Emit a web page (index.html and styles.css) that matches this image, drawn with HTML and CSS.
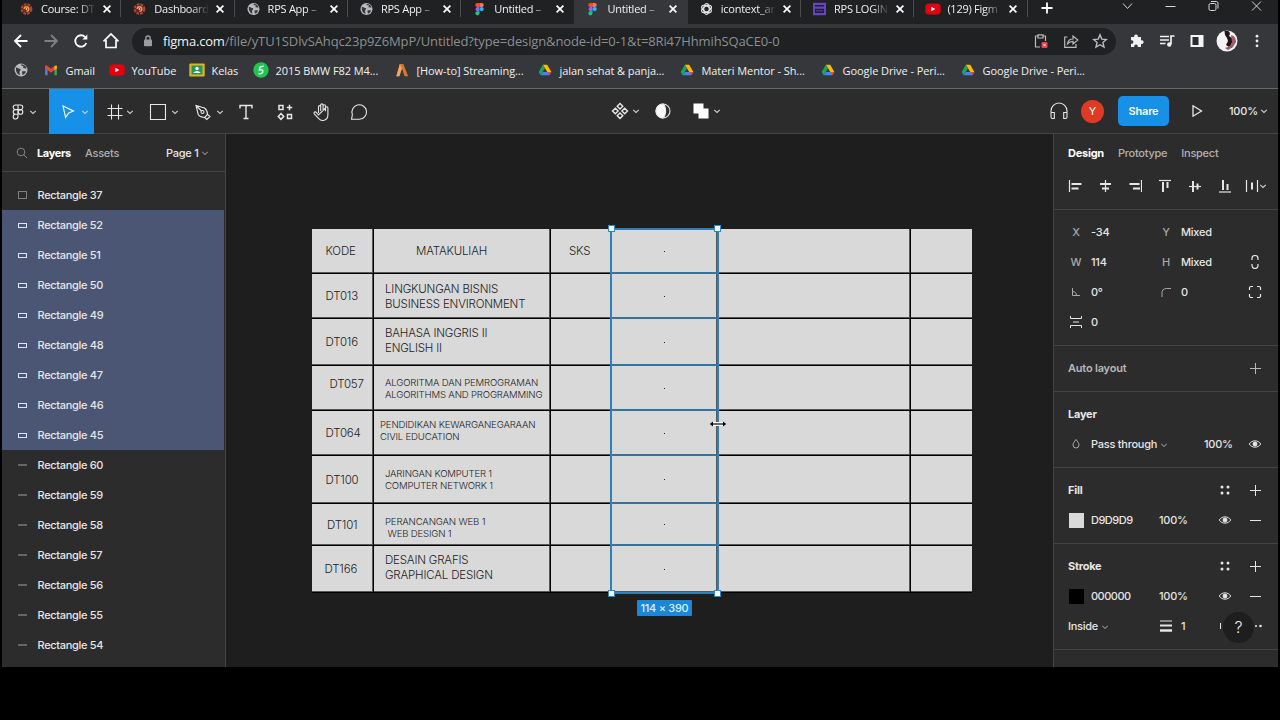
FILE: index.html
```html
<!DOCTYPE html>
<html lang="en">
<head>
<meta charset="utf-8">
<title>Untitled – Figma</title>
<link rel="stylesheet" href="styles.css">
</head>
<body>
<svg class="defs" aria-hidden="true">
  <symbol id="x" viewBox="0 0 10 10"><path d="M1.6 1.6l6.8 6.8M8.4 1.6L1.6 8.4" fill="none" stroke="currentColor" stroke-width="1.7"/></symbol>
  <symbol id="chev" viewBox="0 0 10 10"><path d="M2.2 3.8L5 6.4l2.800-2.600" fill="none" stroke="currentColor" stroke-width="1.1"/></symbol>
  <symbol id="globe" viewBox="0 0 14 14"><circle cx="7" cy="7" r="6.500" fill="#b9bcbf"/><path d="M2 4.500c2 0 2.500 1.500 4.500 1.500.5 2-1.500 2-1 3.500L6 12C3.500 11.500 1.500 9 2 4.500zM7 1.500c0 1.500 1 1.500 2.500 1.500L9 5c1.500 0 2 .5 3.500.5C12.500 3.500 10 1.300 7 1.500zM8 8.500c1.500-.5 2.500 0 4 0-.7 2-2 3-3.500 3.500z" fill="#37393c"/></symbol>
  <symbol id="course" viewBox="0 0 14 14"><circle cx="7" cy="7" r="5" fill="none" stroke="#b0472f" stroke-width="2.600" stroke-dasharray="3 1"/><circle cx="7" cy="7" r="4" fill="#6b2440"/><path d="M4.500 7a2.500 2.500 0 1 1 2.500 2.500" fill="none" stroke="#f0a13a" stroke-width="1.500"/><circle cx="7" cy="7" r="1" fill="#ffd35c"/></symbol>
  <symbol id="figma" viewBox="0 0 12 16"><path d="M6 1H3.500a2.400 2.400 0 0 0 0 4.800H6z" fill="#f24e1e"/><path d="M6 1h2.500a2.400 2.400 0 0 1 0 4.800H6z" fill="#ff7262"/><path d="M6 5.800H3.500a2.400 2.400 0 0 0 0 4.700H6z" fill="#a259ff"/><circle cx="8.500" cy="8.100" r="2.400" fill="#1abcfe"/><path d="M6 10.500H3.500A2.400 2.400 0 1 0 6 12.900z" fill="#0acf83"/></symbol>
  <symbol id="yt" viewBox="0 0 16 12"><rect x=".3" y=".5" width="15.400" height="11" rx="3.500" fill="#e3000f"/><path d="M6.300 3.700v4.600L10.300 6z" fill="#fff"/></symbol>
  <symbol id="drive" viewBox="0 0 16 14"><path d="M5.500 1h5l4.800 8.300h-4.700L8 4.900z" fill="#ffba00"/><path d="M5.500 1L8 4.900 5.600 9.100 2.800 13 .8 9.300z" fill="#1ea362"/><path d="M5.500 9.300h9.800L13 13H2.800z" fill="#4285f4"/><path d="M11 9.300h4.300L13 13z" fill="#ea4335"/></symbol>
  <symbol id="gpt" viewBox="0 0 14 14"><g fill="none" stroke="#e8e8e8" stroke-width="1.300"><ellipse cx="7" cy="7" rx="3" ry="5.800"/><ellipse cx="7" cy="7" rx="3" ry="5.800" transform="rotate(60 7 7)"/><ellipse cx="7" cy="7" rx="3" ry="5.800" transform="rotate(120 7 7)"/></g></symbol>
  <symbol id="eye" viewBox="0 0 14 14"><path d="M1.300 7C3.500 2.800 10.500 2.800 12.700 7 10.500 11.200 3.500 11.200 1.300 7z" fill="none" stroke="currentColor"/><circle cx="7" cy="7" r="2" fill="currentColor"/></symbol>
  <symbol id="plus" viewBox="0 0 12 12"><path d="M6.500 1v11M1 6.500h11" stroke="currentColor" fill="none"/></symbol>
  <symbol id="minus" viewBox="0 0 12 12"><path d="M1 6.500h11" stroke="currentColor" fill="none"/></symbol>
  <symbol id="dots" viewBox="0 0 12 12"><g fill="currentColor" stroke="none"><circle cx="3" cy="3" r="1.500"/><circle cx="9" cy="3" r="1.500"/><circle cx="3" cy="9" r="1.500"/><circle cx="9" cy="9" r="1.500"/></g></symbol>
</svg>

<div class="window">
  <div class="tabstrip">
    <div class="tab"><svg class="fav"><use href="#course"/></svg><span class="tabname">Course: DT</span><svg class="close"><use href="#x"/></svg></div>
    <div class="tab"><svg class="fav"><use href="#course"/></svg><span class="tabname">Dashboard</span><svg class="close"><use href="#x"/></svg></div>
    <div class="tab"><svg class="fav"><use href="#globe"/></svg><span class="tabname">RPS App –</span><svg class="close"><use href="#x"/></svg></div>
    <div class="tab"><svg class="fav"><use href="#globe"/></svg><span class="tabname">RPS App –</span><svg class="close"><use href="#x"/></svg></div>
    <div class="tab plain"><svg class="fav"><use href="#figma"/></svg><span class="tabname">Untitled –</span><svg class="close"><use href="#x"/></svg></div>
    <div class="tab active"><svg class="fav"><use href="#figma"/></svg><span class="tabname">Untitled –</span><svg class="close"><use href="#x"/></svg></div>
    <div class="tab"><svg class="fav"><use href="#gpt"/></svg><span class="tabname">icontext_ar</span><svg class="close"><use href="#x"/></svg></div>
    <div class="tab"><svg class="fav" viewBox="0 0 14 14"><path d="M1 1.500h12v11H1zM1 5.500h12" fill="none" stroke="#6544c9" stroke-width="2.200"/><path d="M3 9h8" stroke="#6544c9"/></svg><span class="tabname">RPS LOGIN</span><svg class="close"><use href="#x"/></svg></div>
    <div class="tab"><svg class="fav wide"><use href="#yt"/></svg><span class="tabname">(129) Figm</span><svg class="close"><use href="#x"/></svg></div>
    <svg class="newtab" viewBox="0 0 12 12"><path d="M6 .5v11M.5 6h11" stroke="#fff" stroke-width="1.800"/></svg>
    <div class="wincontrols">
      <svg viewBox="0 0 12 12"><path d="M1.500 3.500L6 8.500l4.500-5"/></svg>
      <svg viewBox="0 0 12 12"><path d="M1 6.500h10"/></svg>
      <svg viewBox="0 0 12 12"><rect x="1.500" y="3.500" width="7" height="7" rx="1.500"/><path d="M3.500 1.500H9A1.700 1.700 0 0 1 10.500 3v5.500"/></svg>
      <svg viewBox="0 0 12 12"><path d="M1.500 1.500l9 9M10.500 1.500l-9 9"/></svg>
    </div>
  </div>

  <div class="navbar">
    <svg class="nav" viewBox="0 0 18 18"><path d="M15.500 9H3M9 3L3 9l6 6"/></svg>
    <svg class="nav dim" viewBox="0 0 18 18"><path d="M2.500 9H15M9 3l6 6-6 6"/></svg>
    <svg class="nav" viewBox="0 0 18 18"><path d="M14.300 11a5.700 5.700 0 1 1-1.200-6"/><path d="M15.300 2.500v5h-5z" fill="#fff" stroke="none"/></svg>
    <svg class="nav" viewBox="0 0 18 18"><path d="M1.500 9.300L9 2l7.500 7.300M4 8v7.500h10V8" stroke-width="1.700"/></svg>
    <div class="omnibox">
      <svg class="lock" viewBox="0 0 10 12"><path d="M2.800 5V3.200a2.200 2.200 0 0 1 4.400 0V5" fill="none" stroke="#9a9da0" stroke-width="1.300"/><rect x="1" y="4.600" width="8" height="6.600" rx="1" fill="#9a9da0"/></svg>
      <span class="url"><b>figma.com</b>/file/yTU1SDlvSAhqc23p9Z6MpP/Untitled?type=design&amp;node-id=0-1&amp;t=8Ri47HhmihSQaCE0-0</span>
      <svg class="act" viewBox="0 0 16 16"><path d="M7 14H2.500V3H5M10 3h2.500v5M5 1.800h5V5H5z"/><rect x="8.500" y="9" width="6" height="6" rx="1" fill="#e5404a" stroke="none"/><path d="M10.300 10.800l2.400 2.400m0-2.400l-2.400 2.400" stroke-width=".8" stroke="#fff"/></svg>
      <svg class="act" viewBox="0 0 16 16"><path d="M4.500 4H1.700v10.300H13V11M4.500 10.800C5 7.500 7 6 10 6V3l4.800 4L10 11V8.300c-2.500 0-4 .7-5.500 2.500z"/></svg>
      <svg class="act" viewBox="0 0 16 16"><path d="M8 1.800l1.800 4.300 4.600.4-3.500 3 1.100 4.600L8 11.700l-4 2.400 1.100-4.600-3.500-3 4.600-.4z" stroke-width="1.400"/></svg>
    </div>
    <svg class="ext" viewBox="0 0 16 16"><path d="M2 4h3.200a1.900 1.900 0 1 1 3.600 0H12v3.300a1.900 1.900 0 1 1 0 3.500V14H8.700a1.800 1.800 0 1 0-3.400 0H2v-3.300a1.800 1.800 0 1 0 0-3.400z" fill="#f1f1f1"/></svg>
    <svg class="ext" viewBox="0 0 16 16"><path d="M1 3.500h9M1 7h9M1 10.500h5.500M12 11V3h3.500" stroke="#f1f1f1" stroke-width="1.700" fill="none"/><circle cx="10.300" cy="11.500" r="2.200" fill="#f1f1f1"/></svg>
    <svg class="ext" viewBox="0 0 16 16"><rect x="1.500" y="2" width="13" height="12" fill="#f4f4f4"/><rect x="3.500" y="4" width="6" height="8" fill="#292b2e"/></svg>
    <svg class="profile" viewBox="0 0 22 22"><circle cx="11" cy="11" r="10.500" fill="#f6f2f3"/><path d="M8.500 1c3-1 5.500 0 5.500 3l-1 2 3 2 1 5-1 5-3-1-3-2 2-4-1-3-2-3z" fill="#21151b"/><path d="M15 5c4 1 5 4 5 7l-3 5-5 3-3-2 5-2 2-4z" fill="#9b5b69"/></svg>
    <svg class="ext" viewBox="0 0 16 16"><g fill="#eee"><circle cx="8" cy="3.200" r="1.400"/><circle cx="8" cy="8" r="1.400"/><circle cx="8" cy="12.800" r="1.400"/></g></svg>
  </div>

  <div class="bookmarks">
    <div class="bm"><svg><use href="#globe"/></svg></div>
    <div class="bm"><svg viewBox="0 0 16 14"><path d="M1.300 2.500h2.800V13H1.300z" fill="#4285f4"/><path d="M11.900 2.500h2.800V13h-2.800z" fill="#34a853"/><path d="M1.300 1.800l1.600-.3L8 5.600l5.100-4.100 1.600.6v3L8 10 1.300 5z" fill="#ea4335"/><path d="M11.900 2.500l2.800-.5v3.200L11.900 7z" fill="#fbbc04"/></svg>Gmail</div>
    <div class="bm"><svg class="wide"><use href="#yt"/></svg>YouTube</div>
    <div class="bm"><svg class="wide" viewBox="0 0 16 14"><rect x=".3" y=".5" width="15.400" height="13" rx="1" fill="#e0b41e"/><rect x="2.500" y="2.500" width="11" height="9" fill="#25955a"/><circle cx="8" cy="5.500" r="1.700" fill="#fff"/><path d="M4.500 10c0-2.500 7-2.500 7 0z" fill="#fff"/></svg>Kelas</div>
    <div class="bm"><svg class="wide round" viewBox="0 0 16 16"><circle cx="8" cy="8" r="7.700" fill="#25c254"/><path d="M10.800 4L7 5 6.300 8c3-.8 4 .3 3.400 2-.6 1.600-2.400 2-4.200 1.500" fill="none" stroke="#dfffe6" stroke-width="1.400"/></svg>2015 BMW F82 M4...</div>
    <div class="bm"><svg viewBox="0 0 16 16"><path d="M1.500 15L5.500 1h4L15 15h-4.200L8 6 5 15z" fill="#d9752f"/><path d="M1.500 15L5.500 1 8 6 5 15z" fill="#f0a468"/></svg>[How-to] Streaming...</div>
    <div class="bm"><svg><use href="#drive"/></svg>jalan sehat &amp; panja...</div>
    <div class="bm"><svg><use href="#drive"/></svg>Materi Mentor - Sh...</div>
    <div class="bm"><svg><use href="#drive"/></svg>Google Drive - Peri...</div>
    <div class="bm"><svg><use href="#drive"/></svg>Google Drive - Peri...</div>
  </div>

  <div class="toolbar">
    <div class="tool main"><svg class="ico" viewBox="0 0 20 20"><path d="M10 3H7.500a2.300 2.300 0 0 0 0 4.600H10zm0 0h2.500a2.300 2.300 0 0 1 0 4.600H10zm0 4.600H7.500a2.300 2.300 0 0 0 0 4.600H10zm0 4.600H7.500A2.400 2.400 0 1 0 10 14.600z"/><circle cx="12.500" cy="9.900" r="2.300"/></svg><svg class="chev"><use href="#chev"/></svg></div>
    <div class="tool on"><svg class="ico" viewBox="0 0 20 20"><path d="M5 4l10.500 5L10.700 10.900 7.600 15.500z"/></svg><svg class="chev"><use href="#chev"/></svg></div>
    <div class="tool frame"><svg class="ico" viewBox="0 0 20 20"><path d="M6.500 2.500v15M13.500 2.500v15M2.500 6.500h15M2.500 13.500h15"/></svg><svg class="chev"><use href="#chev"/></svg></div>
    <div class="tool"><svg class="ico" viewBox="0 0 20 20"><path d="M2.500 2.500h15v15h-15z"/></svg><svg class="chev"><use href="#chev"/></svg></div>
    <div class="tool"><svg class="ico" viewBox="0 0 20 20"><path d="M3 3.500l8.500 2.500c2 1.500 3 4.500 3 6.500l-2.800 3c-2-.2-5.200-.5-6.500-3zM3 3.500L8.500 9M14.500 12.300l2.500 2.200-3.200 3-2.300-2.200"/><circle cx="9.500" cy="10" r="1.500"/></svg><svg class="chev"><use href="#chev"/></svg></div>
    <div class="tool single"><svg class="ico" viewBox="0 0 20 20"><path d="M4 6.500v-3h12v3M10 3.500v13M7.500 16.500h5" stroke-width="1.400"/></svg></div>
    <div class="tool single res"><svg class="ico" viewBox="0 0 20 20"><path d="M4 3.500h4v4H4zM12.500 12.500h4v4h-4zM6 11.600l2.700 2.900L6 17.300l-2.700-2.800zM14.500 2.800v5.400M11.800 5.500h5.400" stroke-width="1.500"/></svg></div>
    <div class="tool single hand"><svg class="ico" viewBox="0 0 20 20"><path d="M6.500 11V4.800c0-1.600 2.200-1.600 2.200 0V9m0-4.200V3.100c0-1.700 2.400-1.700 2.400 0V9m0-5c0-1.700 2.400-1.600 2.400 0v5.300m0-3.300c0-1.600 2.400-1.600 2.400 0v6.500c0 7-7 7-9.200 4L2.300 11.800c-1-1.500 1-2.600 2-1.400L6.500 13z"/></svg></div>
    <div class="tool single cmt"><svg class="ico" viewBox="0 0 20 20"><path d="M2.500 17.300l.9-4.700A7.300 7.300 0 1 1 10.500 17.300z"/></svg></div>
    <div class="mid">
      <svg class="ico" viewBox="0 0 20 20"><path d="M10 2.500L12.800 5.300 10 8.100 7.200 5.300zM10 11.900l2.800 2.800L10 17.500l-2.800-2.800zM5.300 7.200L8.100 10l-2.800 2.800L2.500 10zM14.700 7.200l2.800 2.800-2.800 2.800-2.800-2.800z" stroke-width="1.400"/></svg><svg class="chev"><use href="#chev"/></svg>
      <svg class="ico mask" viewBox="0 0 20 20"><circle cx="10" cy="10" r="7"/><path d="M10 3a7 7 0 0 0 0 14C13.500 14 13.500 6 10 3z" fill="#fff"/></svg>
      <svg class="ico bool" viewBox="0 0 20 20"><path d="M2.500 2.500h10v5h5v10h-10v-5h-5z" fill="#fff" stroke="none"/></svg><svg class="chev"><use href="#chev"/></svg>
    </div>
    <div class="end">
      <svg class="ico" viewBox="0 0 20 20"><path d="M2 15.500V10a8 8 0 0 1 16 0v5.500M2 11.500h3.300v6H3.500A1.500 1.500 0 0 1 2 16zM18 11.500h-3.300v6h1.800A1.500 1.500 0 0 0 18 16z"/></svg>
      <span class="avatar">Y</span>
      <span class="share">Share</span>
      <svg class="ico play" viewBox="0 0 20 20"><path d="M6 4.800l8.500 5.200L6 15.200z" stroke-width="1.300"/></svg>
      <span class="zoom">100%</span><svg class="chev"><use href="#chev"/></svg>
    </div>
  </div>

  <div class="workspace">
    <div class="left">
      <div class="lefthead"><svg class="search" viewBox="0 0 12 12"><circle cx="5" cy="5" r="3.800"/><path d="M7.800 7.800L11 11"/></svg><b>Layers</b><span class="assets">Assets</span><span class="page">Page 1</span><svg class="chev dim"><use href="#chev"/></svg></div>
      <div class="layers">
        <div class="layer"><i class="box tall"></i>Rectangle 37</div>
        <div class="layer sel"><i class="box"></i>Rectangle 52</div>
        <div class="layer sel"><i class="box"></i>Rectangle 51</div>
        <div class="layer sel"><i class="box"></i>Rectangle 50</div>
        <div class="layer sel"><i class="box"></i>Rectangle 49</div>
        <div class="layer sel"><i class="box"></i>Rectangle 48</div>
        <div class="layer sel"><i class="box"></i>Rectangle 47</div>
        <div class="layer sel"><i class="box"></i>Rectangle 46</div>
        <div class="layer sel"><i class="box"></i>Rectangle 45</div>
        <div class="layer"><i class="box flat"></i>Rectangle 60</div>
        <div class="layer"><i class="box flat"></i>Rectangle 59</div>
        <div class="layer"><i class="box flat"></i>Rectangle 58</div>
        <div class="layer"><i class="box flat"></i>Rectangle 57</div>
        <div class="layer"><i class="box flat"></i>Rectangle 56</div>
        <div class="layer"><i class="box flat"></i>Rectangle 55</div>
        <div class="layer"><i class="box flat"></i>Rectangle 54</div>
      </div>
    </div>

    <div class="canvas">
      <div class="table">
        <div class="cell code">KODE</div><div class="cell title">MATAKULIAH</div><div class="cell sks">SKS</div><div class="cell dot"></div><div class="cell"></div><div class="cell"></div>
        <div class="cell code">DT013</div><div class="cell big">LINGKUNGAN BISNIS<br>BUSINESS ENVIRONMENT</div><div class="cell"></div><div class="cell dot"></div><div class="cell"></div><div class="cell"></div>
        <div class="cell code">DT016</div><div class="cell big up">BAHASA INGGRIS II<br>ENGLISH II</div><div class="cell"></div><div class="cell dot"></div><div class="cell"></div><div class="cell"></div>
        <div class="cell code shift">DT057</div><div class="cell small">ALGORITMA DAN PEMROGRAMAN<br>ALGORITHMS AND PROGRAMMING</div><div class="cell"></div><div class="cell dot"></div><div class="cell"></div><div class="cell"></div>
        <div class="cell code">DT064</div><div class="cell small near">PENDIDIKAN KEWARGANEGARAAN<br>CIVIL EDUCATION</div><div class="cell"></div><div class="cell dot"></div><div class="cell"></div><div class="cell"></div>
        <div class="cell code">DT100</div><div class="cell small">JARINGAN KOMPUTER 1<br>COMPUTER NETWORK 1</div><div class="cell"></div><div class="cell dot"></div><div class="cell"></div><div class="cell"></div>
        <div class="cell code in">DT101</div><div class="cell small down">PERANCANGAN WEB 1<br>&nbsp;WEB DESIGN 1</div><div class="cell"></div><div class="cell dot"></div><div class="cell"></div><div class="cell"></div>
        <div class="cell code out">DT166</div><div class="cell big up">DESAIN GRAFIS<br>GRAPHICAL DESIGN</div><div class="cell"></div><div class="cell dot"></div><div class="cell"></div><div class="cell"></div>
      </div>
      <div class="selection"><i></i><i></i><i></i><i></i><i></i><i></i><i></i><i></i></div>
      <span class="handle tl"></span><span class="handle tr"></span><span class="handle bl"></span><span class="handle br"></span>
      <span class="size">114 × 390</span>
      <svg class="cursor" viewBox="0 0 18 10"><path d="M4 5h10" stroke="#fff" stroke-width="4"/><path d="M3 5h12" stroke="#000" stroke-width="1.200"/><path d="M4 2.500L.8 5 4 7.500zM14 2.500L17.200 5 14 7.500z"/></svg>
    </div>

    <div class="right">
      <div class="modes"><b>Design</b><span>Prototype</span><span>Inspect</span></div>
      <div class="aligns">
        <svg viewBox="0 0 14 14"><path d="M1.500 1v12"/><path d="M3.500 5h10M3.500 9.500h7" class="bar"/></svg>
        <svg viewBox="0 0 14 14"><path d="M7.500 1v12"/><path d="M2 5h11M4 9.500h7" class="bar"/></svg>
        <svg viewBox="0 0 14 14"><path d="M13.500 1v12"/><path d="M1.500 5h10M5 9.500h7" class="bar"/></svg>
        <svg viewBox="0 0 14 14"><path d="M1 1.500h12"/><path d="M5 3v10M9.500 3v6" class="bar"/></svg>
        <svg viewBox="0 0 14 14"><path d="M1 7.500h12"/><path d="M5 2v11M9.500 4.500v6" class="bar"/></svg>
        <svg viewBox="0 0 14 14"><path d="M1 13h12"/><path d="M5 1v10M9.500 5v6" class="bar"/></svg>
        <svg viewBox="0 0 14 14"><path d="M1.500 1v12M12.500 1v12"/><path d="M7 3.500v7" class="bar"/></svg>
        <svg class="chev"><use href="#chev"/></svg>
      </div>
      <div class="sec geo">
        <div class="row"><span class="k">X</span><span>-34</span><span class="k">Y</span><span>Mixed</span></div>
        <div class="row"><span class="k">W</span><span>114</span><span class="k">H</span><span>Mixed</span><svg class="i14" viewBox="0 0 14 14"><path d="M4 5V3.500a3 3 0 0 1 6 0V5M4 9v1.500a3 3 0 0 0 6 0V9" stroke-width="1.200"/></svg></div>
        <div class="row"><svg class="i14 g" viewBox="0 0 14 14"><path d="M3.500 3v7.500H11M3.500 6.500c2.500 0 4 1.500 4 4"/></svg><span>0°</span><svg class="i14 g" viewBox="0 0 14 14"><path d="M3 12V8c0-3 1.500-4.500 4.500-4.500H12"/></svg><span>0</span><svg class="i14" viewBox="0 0 14 14"><path d="M1.500 5V3a1.500 1.500 0 0 1 1.500-1.500h2M9 1.500h2A1.500 1.500 0 0 1 12.500 3v2M12.500 9v2a1.500 1.500 0 0 1-1.500 1.500H9M5 12.500H3A1.500 1.500 0 0 1 1.500 11V9" stroke-width="1.200"/></svg></div>
        <div class="row"><svg class="i14 l" viewBox="0 0 14 14"><path d="M1.500 1v2.500h11V1M1.500 13v-2.500h11V13M4 7h6"/></svg><span>0</span></div>
      </div>
      <div class="sec auto"><div class="head"><b>Auto layout</b><svg class="i12 e"><use href="#plus"/></svg></div></div>
      <div class="sec">
        <div class="head"><b>Layer</b></div>
        <div class="row lay"><svg class="i14 g" viewBox="0 0 14 14"><path d="M7 2.500c1.800 2.200 3 3.800 3 5.500a3 3 0 0 1-6 0c0-1.700 1.200-3.300 3-5.500z"/></svg><span>Pass through<svg class="chev dim"><use href="#chev"/></svg></span><span>100%</span><svg class="i14"><use href="#eye"/></svg></div>
      </div>
      <div class="sec">
        <div class="head"><b>Fill</b><svg class="i12"><use href="#dots"/></svg><svg class="i12 e"><use href="#plus"/></svg></div>
        <div class="row paint"><i class="swatch"></i><span class="hex">D9D9D9</span><span>100%</span><svg class="i14"><use href="#eye"/></svg><svg class="i12"><use href="#minus"/></svg></div>
      </div>
      <div class="sec">
        <div class="head"><b>Stroke</b><svg class="i12"><use href="#dots"/></svg><svg class="i12 e"><use href="#plus"/></svg></div>
        <div class="row paint"><i class="swatch black"></i><span class="hex">000000</span><span>100%</span><svg class="i14"><use href="#eye"/></svg><svg class="i12"><use href="#minus"/></svg></div>
        <div class="row inside"><span>Inside<svg class="chev dim"><use href="#chev"/></svg></span><svg class="i14 l" viewBox="0 0 14 14"><path d="M1 2h12"/><path d="M1 6.500h12" stroke-width="2"/><path d="M1 11.500h12" stroke-width="2.500"/></svg><span>1</span><svg class="i14" viewBox="0 0 14 14"><path d="M2.500 4v6"/></svg><svg class="i14" viewBox="0 0 14 14"><g fill="currentColor" stroke="none"><circle cx="8" cy="7" r="1"/><circle cx="12.500" cy="7" r="1.300"/></g></svg></div>
      </div>
      <span class="help">?</span>
    </div>
  </div>
</div>
</body>
</html>
```

FILE: styles.css
```css
* { box-sizing: border-box; }
body { margin: 0; width: 1280px; height: 720px; overflow: hidden; background: #000; font-family: Inter, "Liberation Sans", sans-serif; }
.defs { position: absolute; width: 0; height: 0; }
svg { display: block; flex: none; }
b { font-weight: 700; }
.window { width: 1276px; height: 667px; margin-left: 2px; background: #2c2c2c; overflow: hidden; display: flex; flex-direction: column; }

/* Browser chrome */
.tabstrip, .navbar, .bookmarks { font-family: "Open Sans", "Noto Sans", sans-serif; color: #f0f1f1; flex: none; display: flex; }
.tabstrip { height: 24px; background: #1f2122; padding-left: 6px; align-items: flex-start; }
.tab { width: 113.3px; height: 24px; padding: 0 0 7px 12px; display: flex; align-items: center; flex: none; position: relative; }
.tab::after { content: ""; position: absolute; right: 0; top: 0; width: 1px; height: 17px; background: #4a4c4f; }
.tab.plain::after, .tab.active::after { display: none; }
.tab.active { background: #35373a; }
.fav { width: 13px; height: 14px; }
.fav.wide { width: 16px; height: 12px; margin: 0 -2px 0 -1px; }
.tabname { font-size: 11px; letter-spacing: -.25px; font-weight: 500; margin: -1px 0 0 8px; width: 57px; flex: none; white-space: nowrap; -webkit-mask-image: linear-gradient(90deg, #000 66%, transparent 97%); mask-image: linear-gradient(90deg, #000 66%, transparent 97%); }
.close { width: 10px; height: 10px; margin-left: 4px; color: #fff; }
.newtab { width: 12px; height: 12px; margin: 2px 0 0 13px; }
.wincontrols { margin-left: auto; display: flex; }
.wincontrols svg { width: 43px; height: 12px; fill: none; stroke: #d6d6d6; stroke-width: 1; }
.navbar { height: 35px; background: #35373a; align-items: center; padding: 0 4px 1px 3.5px; }
.nav { width: 18px; height: 18px; margin: 0 6px; fill: none; stroke: #fff; stroke-width: 1.8; }
.nav.dim { stroke: #7d8083; }
.omnibox { height: 27px; width: 984px; border-radius: 14px; background: #1f2122; margin: 0 6px 0 6.5px; padding: 0 8px 0 11px; display: flex; align-items: center; }
.lock { width: 10px; height: 12px; }
.url { flex: 1; margin-left: 10px; font-size: 13px; letter-spacing: -.12px; color: #8c9093; white-space: nowrap; }
.url b { color: #f2f2f2; font-weight: 500; letter-spacing: -.2px; }
.act { width: 16px; height: 16px; margin-left: 13.5px; fill: none; stroke: #b9bcbe; stroke-width: 1.200; }
.ext { width: 16px; height: 16px; margin: 0 7px; }
.profile { width: 22px; height: 22px; margin: 0 4px; }
.bookmarks { height: 30px; background: #35373a; border-bottom: 1px solid #66686b; font-size: 11px; white-space: nowrap; display: grid; grid-template-columns: 30px 66px 80px 64px 141px 143px 142px 141px 140px 140px; padding-left: 11.5px; align-items: center; }
.bm { display: flex; align-items: center; gap: 8px; padding-bottom: 7px; letter-spacing: -.07px; }
.bm svg { width: 14px; height: 14px; }
.bm svg.wide { width: 16px; margin: 0 -1px; }
.bm svg.round { height: 16px; }

/* Editor toolbar */
.toolbar { height: 45px; flex: none; display: flex; border-bottom: 1px solid #444; color: #e8e8e8; }
.tool { width: 45px; height: 45px; padding-left: 9px; display: flex; align-items: center; gap: 2px; }
.tool.main { width: 47px; padding-left: 6px; gap: 0; }
.tool.on { background: #1790e8; color: #fff; }
.tool.frame { padding-left: 11px; gap: 0; }
.tool.single { width: 37px; padding-left: 7px; }
.tool.res, .tool.cmt { padding-left: 9px; }
.tool.hand { padding-left: 9px; }
.ico { width: 20px; height: 20px; fill: none; stroke: currentColor; stroke-width: 1.1; }
.chev { width: 10px; height: 10px; color: #d0d0d0; }
.chev.dim { color: #858585; }
.mid { display: flex; align-items: center; margin-left: 233px; }
.mid .chev { margin-left: 1px; }
.mask { margin-left: 12px; }
.bool { margin-left: 18px; }
.end { display: flex; align-items: center; margin-left: auto; padding-right: 9px; }
.avatar { width: 23px; height: 23px; border-radius: 50%; background: #e03a24; color: #fff; font-size: 11px; line-height: 23px; text-align: center; margin-left: 12px; }
.share { width: 51px; height: 30px; border-radius: 5px; background: #1790e8; color: #fff; font-size: 11px; font-weight: 600; line-height: 30px; text-align: center; margin-left: 14px; letter-spacing: -.2px; }
.play { margin-left: 18px; }
.zoom { font-size: 11px; width: 30px; margin-left: 22px; letter-spacing: -.2px; font-weight: 500; }

.workspace { flex: 1; min-height: 0; display: flex; font-size: 11px; }

/* Layer list */
.left { width: 224px; border-right: 1px solid #444; color: #e6e6e6; flex: none; font-weight: 500; }
.lefthead { height: 38px; border-bottom: 1px solid #444; display: flex; align-items: center; padding-left: 14px; }
.lefthead b { color: #fff; margin-left: 9px; width: 48px; letter-spacing: -.35px; }
.search { width: 12px; height: 12px; fill: none; stroke: #858585; }
.assets { color: #b0b0b0; width: 81px; letter-spacing: -.25px; }
.page { width: 34px; letter-spacing: -.25px; }
.layers { padding-top: 8px; }
.layer { height: 30px; display: flex; align-items: center; gap: 10.500px; padding-left: 16px; letter-spacing: -.32px; }
.layer.sel { background: #4b5675; margin-right: 1px; }
.box { width: 9px; height: 5px; border: 1px solid #dce6ff; }
.box.tall { height: 8px; border-color: #808080; }
.box.flat { height: 2px; border: 0; background: #666; }

/* Canvas */
.canvas { width: 828px; flex: none; background: #1e1e1e; position: relative; border-right: 1px solid #444; }
.table { position: absolute; left: 86px; top: 95px; display: grid; gap: 1px; background: #000; padding: 0 0 1px; grid-template-columns: 61px 176px 60px 105px 192px 61px; grid-template-rows: 44px 44px 46px 44px 44px 47px 41px 46px; color: #1c1c1c; font-weight: 300; }
.cell { background: #d9d9d9; box-shadow: inset -1px -1px 0 rgba(0, 0, 0, .6); display: flex; align-items: center; white-space: nowrap; font-size: 11.5px; line-height: 15px; letter-spacing: -.18px; }
.cell:nth-child(6n) { box-shadow: inset 0 -1px 0 rgba(0, 0, 0, .6); }
.code { padding: 1px 0 0 13.5px; }
.code.shift { padding: 0 0 7px 17.5px; }
.code.in { padding-left: 15px; }
.code.out { padding-left: 12.5px; }
.title { padding: 1px 0 0 42px; }
.sks { padding: 1px 0 0 18px; }
.big { padding-left: 11px; padding-top: 1px; }
.big.up { padding-top: 0; padding-bottom: 3px; }
.small { padding: 1px 0 0 11px; font-size: 9.6px; line-height: 12px; letter-spacing: -.17px; }
.small.near { padding: 0 0 4px 6px; }
.small.down { padding-top: 7px; }
.dot { justify-content: center; }
.dot::after { content: ""; width: 1px; height: 1px; background: #222; }
.selection { position: absolute; left: 384px; top: 94px; width: 109px; height: 366px; border: 2px solid #2f80b4; display: grid; grid-template-rows: 45px 45px 47px 45px 45px 48px 42px; }
.selection i { border-bottom: 2px solid #34749d; margin-top: -1px; margin-bottom: 1px; }
.selection i:last-child { border: 0; }
.handle { position: absolute; width: 7px; height: 7px; background: #fff; border: 1px solid #268bd1; }
.tl { left: 382px; top: 91px; } .tr { left: 488px; top: 91px; }
.bl { left: 382px; top: 456px; } .br { left: 488px; top: 456px; }
.size { position: absolute; left: 411px; top: 466px; width: 55px; height: 16px; background: #1b87d9; color: #d9f0ff; border-radius: 1px; line-height: 16px; text-align: center; font-weight: 500; letter-spacing: -.3px; }
.cursor { position: absolute; left: 483px; top: 285px; width: 18px; height: 10px; }

/* Inspector */
.right { width: 224px; color: #e6e6e6; position: relative; font-weight: 500; letter-spacing: -.25px; }
.right svg { fill: none; stroke: currentColor; }
.right svg.chev { stroke: none; }
.modes { height: 38px; display: flex; align-items: center; gap: 14px; padding-left: 14px; color: #b0b0b0; }
.modes b { color: #fff; }
.aligns { height: 38px; border-bottom: 1px solid #444; display: flex; align-items: center; padding: 0 0 9px 14px; }
.aligns svg { width: 14px; height: 14px; margin-right: 16px; stroke-width: 1.2; }
.aligns .bar { stroke-width: 2; }
.aligns svg:nth-last-child(2) { margin-right: -1px; margin-left: -3px; }
.aligns svg.chev { width: 10px; height: 10px; margin: 0; }
.sec { border-bottom: 1px solid #444; padding: 7px 0 8px 12px; }
.row { height: 30px; display: grid; grid-template-columns: 20px 70px 20px 69px 20px; align-items: center; justify-items: start; }
.row > span:not(.k) { padding-left: 5px; }
.k, .g { color: #a8a8a8; }
.k, .row > svg { justify-self: center; }
.i14 { width: 14px; height: 14px; }
.i12 { width: 12px; height: 12px; overflow: visible; }
.head { height: 30px; display: grid; grid-template-columns: 149px 20px 10px 20px; align-items: center; justify-items: start; }
.head b { padding-left: 2px; }
.head .i12 { justify-self: center; }
.head .e { grid-column: 4; }
.auto { color: #b8b8b8; }
.auto b { font-weight: 600; letter-spacing: -.2px; }
.row span .chev { display: inline-block; vertical-align: -2px; margin-left: 2px; }
.row.lay { grid-template-columns: 20px 113px 46px 20px; }
.row.paint { grid-template-columns: 20px 68px 61px 20px 10px 20px; }
.row.paint > :nth-child(5) { grid-column: 6; }
.row .hex { letter-spacing: -.5px; }
.swatch { width: 15px; height: 15px; background: #d9d9d9; justify-self: center; }
.swatch.black { background: #000; }
.row.inside { grid-template-columns: 90px 20px 39px 20px 10px 20px; }
.row.inside > span:first-child { padding-left: 2px; }
.row.inside > :nth-child(5) { grid-column: 6; }
.help { position: absolute; left: 169px; top: 478px; width: 31px; height: 31px; border-radius: 50%; background: #1e1e1e; text-align: center; line-height: 31px; font-size: 16px; font-weight: 300; color: #eee; }
```
